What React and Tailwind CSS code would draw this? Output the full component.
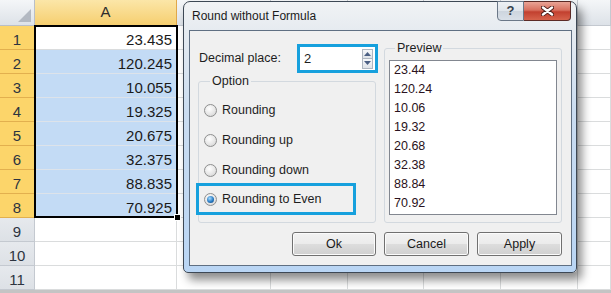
import React from "react";

const values = ["23.435", "120.245", "10.055", "19.325", "20.675", "32.375", "88.835", "70.925", "", "", ""];
const preview = ["23.44", "120.24", "10.06", "19.32", "20.68", "32.38", "88.84", "70.92"];
// columns B..G sit under the dialog or past the edge, so their headers stay blank
const others = ["B", "C", "D", "E", "F", "G"];

const Sheet = () => {
  return (
    <div className="relative">
      <div className="grid grid-cols-[35px_142px_94px_77px_76px_77px_77px_1fr] grid-rows-[26px_repeat(11,24px)_3px] text-[15px] text-[#1a1a1a]">
        <div className="relative border-r border-b border-[#b9bfc8] bg-[linear-gradient(180deg,#f4f6f8,#dde2e8)]">
          <svg className="absolute right-[3px] bottom-[3px]" width="13" height="13">
            <path d="M13 0 L13 13 L0 13 Z" fill="#b3b9c2" />
          </svg>
        </div>
        <div className="flex items-center justify-center border-r border-b border-[#e0a84a] bg-[linear-gradient(180deg,#fbe6a8,#f6cf70)] text-[#2d2d2d]">
          A
        </div>
        {others.map((l) => (
          <div
            key={l}
            className="border-r border-b border-[#c4c9d0] bg-[linear-gradient(180deg,#f4f6f8,#dde2e8)]"
          />
        ))}
        {values.map((v, i) => {
          const selected = i < 8;
          return (
            <React.Fragment key={i}>
              <div
                className={
                  selected
                    ? "flex items-end justify-center pb-[1px] leading-[17px] border-r border-b border-[#e2b04e] bg-[#fcd56a] text-[#2d3440]"
                    : "flex items-end justify-center pb-[1px] leading-[17px] border-r border-b border-[#c4c9d0] bg-[linear-gradient(180deg,#e6e9ed,#dde1e6)] text-[#2d3440]"
                }
              >
                {i + 1}
              </div>
              <div
                className={
                  i === 0
                    ? "flex items-end justify-end pr-[4px] pb-[1px] leading-[17px] border-r border-b border-[#dadcdd] bg-white"
                    : selected
                    ? "flex items-end justify-end pr-[4px] pb-[1px] leading-[17px] border-r border-b border-[#dde3ea] bg-[#c3dbf5]"
                    : "flex items-end justify-end pr-[4px] pb-[1px] leading-[17px] border-r border-b border-[#dadcdd] bg-white"
                }
              >
                {v}
              </div>
              {others.map((l) => (
                <div key={l} className="border-r border-b border-[#dadcdd] bg-white" />
              ))}
            </React.Fragment>
          );
        })}
        <div className="col-span-8 bg-[#c4c4c4]" />
      </div>
      <div className="absolute left-[34px] top-[25px] w-[144px] h-[193px] border-2 border-black" />
      <div className="absolute left-[174px] top-[214px] w-[7px] h-[7px] bg-black border border-white" />
    </div>
  );
};

const Radio = ({ checked }) => (
  <span className="flex w-[13px] h-[13px] shrink-0 items-center justify-center rounded-full border border-[#8e8f8f] bg-[radial-gradient(circle_at_40%_35%,#ffffff,#e4e4e4_60%,#c9c9c9)]">
    {checked && (
      <span className="w-[7px] h-[7px] rounded-full bg-[radial-gradient(circle_at_40%_35%,#a6dcff,#2a7cc4_55%,#0d3b72)]" />
    )}
  </span>
);

const Button = ({ children, width }) => (
  <button
    className={`${width} h-[24px] rounded-[3px] border border-[#707070] bg-[linear-gradient(180deg,#f2f2f2_0%,#ebebeb_50%,#dddddd_51%,#cfcfcf_100%)] text-[12.5px] text-[#1a1a1a] shadow-[inset_0_0_0_1px_#fbfbfb]`}
  >
    {children}
  </button>
);

const Dialog = () => {
  return (
    <div className="absolute left-[183px] top-[1px] w-[394px] h-[272px] flex flex-col rounded-t-[7px] rounded-b-[5px] border border-[#3d4855] bg-[linear-gradient(180deg,#f1f3f5_0px,#e6ebf0_28px,#cadcf0_110px,#b9d5f4_100%)] pl-[5px] pr-[4px] pb-[6px] shadow-[5px_7px_10px_rgba(0,0,0,0.45)] text-[#1e1e1e]">
      <div className="flex h-[28px] shrink-0 items-start justify-between">
        <span className="mt-[7px] ml-[3px] text-[12px] leading-[14px] text-[#1b1b1b]">Round without Formula</span>
        <div className="-mt-[1px] mr-[1px] flex">
          <div className="flex w-[27px] h-[20px] items-center justify-center rounded-bl-[4px] border border-[#6b7888] bg-[linear-gradient(180deg,#eef1f4_0%,#dfe5eb_50%,#cdd5de_51%,#d9e0e8_100%)] text-[13px] font-bold text-[#36414d]">
            ?
          </div>
          <div className="flex w-[47px] h-[20px] items-center justify-center rounded-br-[4px] border border-l-0 border-[#5b2a26] bg-[linear-gradient(180deg,#e9a496_0%,#d8705f_45%,#c2402f_55%,#d6634c_100%)]">
            <svg width="13" height="10" viewBox="0 0 13 10">
              <path d="M2 1.5 L11 8.5 M11 1.5 L2 8.5" stroke="#4a1e1a" strokeWidth="4.2" strokeLinecap="round" />
              <path d="M2 1.5 L11 8.5 M11 1.5 L2 8.5" stroke="#ffffff" strokeWidth="2.4" strokeLinecap="round" />
            </svg>
          </div>
        </div>
      </div>
      <div className="flex flex-1 flex-col border border-[#5f6f82] bg-[#f0f0f0] pl-[8px] pr-[9px] text-[12.5px]">
        <div className="flex gap-[8px]">
          <div className="flex w-[178px] flex-col pt-[13px]">
            <div className="flex items-center">
              <span className="w-[99px] shrink-0 pl-[1px]">Decimal place:</span>
              <div className="flex w-[81px] h-[29px] shrink-0 items-center border-[3px] border-[#16a0dd] bg-white pr-[2px]">
                <span className="flex-1 pl-[4px] text-[13px]">2</span>
                <div className="flex flex-col">
                  <div className="flex w-[11px] h-[10px] items-center justify-center border border-[#aeb6c0] bg-[linear-gradient(180deg,#f7f8fa,#dfe3e8)]">
                    <svg width="7" height="4">
                      <path d="M0 4 L3.5 0 L7 4 Z" fill="#4b5f83" />
                    </svg>
                  </div>
                  <div className="flex w-[11px] h-[10px] items-center justify-center border border-t-0 border-[#aeb6c0] bg-[linear-gradient(180deg,#f7f8fa,#dfe3e8)]">
                    <svg width="7" height="4">
                      <path d="M0 0 L3.5 4 L7 0 Z" fill="#4b5f83" />
                    </svg>
                  </div>
                </div>
              </div>
            </div>
            <fieldset className="mt-[1px] h-[149px] rounded-[3px] border border-[#d3d9df] pl-[5px]">
              <legend className="ml-[6px] px-[2px] leading-[15px]">Option</legend>
              <div className="pt-[6px]">
                {["Rounding", "Rounding up", "Rounding down"].map((t) => (
                  <div key={t} className="flex h-[30px] items-center gap-[5px]">
                    <Radio />
                    <span>{t}</span>
                  </div>
                ))}
                <div className="-mt-[2px] -ml-[8px] flex w-[160px] h-[32px] items-center gap-[5px] border-[3px] border-[#16a0dd] pl-[5px]">
                  <Radio checked />
                  <span>Rounding to Even</span>
                </div>
              </div>
            </fieldset>
          </div>
          <div className="flex w-[178px] flex-col pt-[10px]">
            <fieldset className="h-[182px] rounded-[3px] border border-[#d3d9df] px-[4px] pb-[4px]">
              <legend className="ml-[6px] px-[2px] leading-[15px]">Preview</legend>
              <div className="mt-[4px] h-[155px] border border-[#828790] bg-white pl-[4px] text-[#2a1220]">
                {preview.map((p) => (
                  <div key={p} className="h-[19px] leading-[19px]">
                    {p}
                  </div>
                ))}
              </div>
            </fieldset>
          </div>
        </div>
        <div className="mt-[9px] flex justify-end gap-[8px]">
          <Button width="w-[84px]">Ok</Button>
          <Button width="w-[85px]">Cancel</Button>
          <Button width="w-[85px]">Apply</Button>
        </div>
      </div>
    </div>
  );
};

export default function App() {
  return (
    <div className="relative w-[611px] h-[293px] overflow-hidden bg-white font-['Liberation_Sans',Arial,sans-serif]">
      <Sheet />
      <Dialog />
    </div>
  );
}
